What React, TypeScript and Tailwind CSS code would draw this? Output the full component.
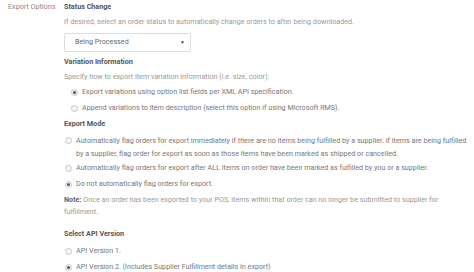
import React from "react";

function Radio({ checked }: { checked?: boolean }) {
  return (
    <span className="mt-[3px] flex h-[7px] w-[7px] flex-shrink-0 items-center justify-center rounded-full border border-[#c8c8c8] bg-[#f4f4f4]">
      {checked && <span className="h-[3px] w-[3px] rounded-full bg-[#555]" />}
    </span>
  );
}

function Option({
  checked,
  children,
  className = "",
}: {
  checked?: boolean;
  children: React.ReactNode;
  className?: string;
}) {
  return (
    <div className={`flex gap-[4px] text-[#777] ${className}`}>
      <Radio checked={checked} />
      <span>{children}</span>
    </div>
  );
}

export default function App() {
  return (
    <div
      className="flex h-[272px] w-[474px] overflow-hidden bg-white text-[7.2px]"
      style={{ fontFamily: "Roboto, 'Liberation Sans', sans-serif" }}
    >
      <div className="w-[64px] flex-shrink-0 pl-[8px] pt-[1px] leading-[12px] text-[#888]">
        Export Options
      </div>
      <div className="flex-1 pt-[1px] pr-[4px]">
        <div className="font-bold leading-[12px] text-[#555]">Status Change</div>
        <div className="mt-[3px] leading-[12px] text-[#999]">
          If desired, select an order status to automatically change orders to after being downloaded.
        </div>
        <div className="mt-[5px] flex h-[19px] w-[127px] items-center justify-between rounded-[2px] border border-[#ddd] pl-[10px] pr-[5px] text-[#666]">
          <span>Being Processed</span>
          <span className="text-[5px] text-[#444]">▼</span>
        </div>

        <div className="mt-[4px] font-bold leading-[12px] text-[#555]">Variation Information</div>
        <div className="mt-[3px] leading-[12px] text-[#999]">
          Specify how to export item variation information (i.e. size, color):
        </div>
        <Option checked className="mt-[3px] pl-[7px] leading-[12px]">
          Export variations using option list fields per XML API specification.
        </Option>
        <Option className="mt-[4px] pl-[7px] leading-[12px]">
          Append variations to item description (select this option if using Microsoft RMS).
        </Option>

        <div className="mt-[4px] font-bold leading-[12px] text-[#555]">Export Mode</div>
        <Option className="mt-[4px] pl-[1px] leading-[13px]">
          Automatically flag orders for export immediately if there are no items being fulfilled by a supplier. If items are being fulfilled by a supplier, flag order for export as soon as those items have been marked as shipped or cancelled.
        </Option>
        <Option className="mt-[2px] pl-[1px] leading-[12px]">
          Automatically flag orders for export after ALL items on order have been marked as fulfilled by you or a supplier.
        </Option>
        <Option checked className="mt-[4px] pl-[1px] leading-[12px]">
          Do not automatically flag orders for export.
        </Option>
        <div className="mt-[4px] leading-[12px] text-[#999]">
          <span className="font-bold text-[#666]">Note:</span> Once an order has been exported to your POS, items within that order can no longer be submitted to supplier for fulfillment.
        </div>

        <div className="mt-[10px] font-bold leading-[12px] text-[#555]">Select API Version</div>
        <Option className="mt-[5px] pl-[1px] leading-[12px]">API Version 1.</Option>
        <Option checked className="mt-[4px] pl-[1px] leading-[12px]">
          API Version 2. (Includes Supplier Fulfillment details in export)
        </Option>
      </div>
    </div>
  );
}
